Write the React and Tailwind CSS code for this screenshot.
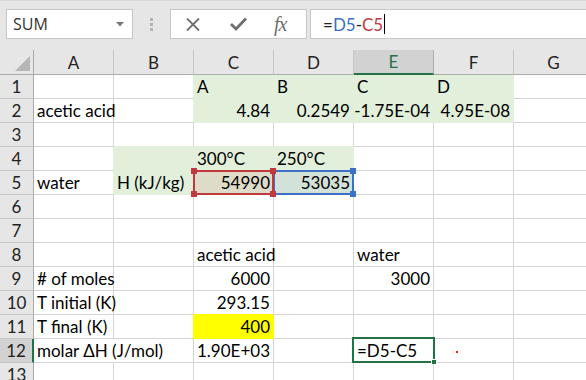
import React from "react";

const BR = {
  n: "border-r-[#d4d4d4]",
  g: "border-r-[#e2efda]",
  y: "border-r-[#ffff00]",
  t: "border-r-[#dfdbc9]",
  b: "border-r-[#d2e2d8]",
  w: "border-r-white",
};
const BB = {
  n: "border-b-[#d4d4d4]",
  g: "border-b-[#e2efda]",
  y: "border-b-[#ffff00]",
  t: "border-b-[#dfdbc9]",
  b: "border-b-[#d2e2d8]",
};
const BG = {
  n: "",
  g: "bg-[#e2efda]",
  y: "bg-[#ffff00]",
  t: "bg-[#dfdbc9]",
  b: "bg-[#d2e2d8]",
};

const L = (t, f) => ({ t, a: "l", f });
const R = (t, f) => ({ t, a: "r", f });
const E = null;

const rows = [
  [E, E, L("A", "g"), L("B", "g"), L("C", "g"), L("D", "g"), E],
  [L("acetic acid"), E, R("4.84", "g"), R("0.2549", "g"), R("-1.75E-04", "g"), R("4.95E-08", "g"), E],
  [E, E, E, E, E, E, E],
  [E, { f: "g" }, L("300°C", "g"), L("250°C", "g"), E, E, E],
  [L("water"), L("H (kJ/kg)", "g"), R("54990", "t"), R("53035", "b"), E, E, E],
  [E, E, E, E, E, E, E],
  [E, E, E, E, E, E, E],
  [E, E, L("acetic acid"), E, L("water"), E, E],
  [L("# of moles"), E, R("6000"), E, R("3000"), E, E],
  [L("T initial (K)"), E, R("293.15"), E, E, E, E],
  [L("T final (K)"), E, R("400", "y"), E, E, E, E],
  [{ t: "molar ΔH (J/mol)", a: "l", over: true }, E, R("1.90E+03"), E, L("=D5-C5"), E, E],
  [E, E, E, E, E, E, E],
];

const cols = ["A", "B", "C", "D", "E", "F", "G"];

function fillAt(r, c) {
  if (r < 0 || r >= rows.length || c < 0 || c >= 7) return "n";
  const cell = rows[r][c];
  return (cell && cell.f) || "n";
}

function Cell({ r, c }) {
  const cell = rows[r][c];
  const own = fillAt(r, c);
  const right = own !== "n" ? own : fillAt(r, c + 1);
  const down = own !== "n" ? own : fillAt(r + 1, c);
  const br = cell && cell.over ? BR.w : BR[right];
  const bb = BB[down];
  const align = cell && cell.a === "r" ? "justify-end" : "justify-start";
  return (
    <div
      className={`relative flex items-end h-[24px] w-[80px] shrink-0 border-r border-b ${br} ${bb} ${BG[own]} ${align}`}
    >
      {cell && cell.t ? (
        <span className="relative z-10 whitespace-nowrap px-[3px] pb-[1px] leading-[20px] text-[17px] text-black">
          {cell.t}
        </span>
      ) : null}
      {r === 4 && c === 3 ? (
        <div className="absolute left-[-1px] top-[-1px] w-[81px] h-[25px] border-2 border-[#3b70c6] z-20">
          <div className="absolute right-[-4px] top-[-4px] w-[6px] h-[6px] bg-[#3b70c6]" />
          <div className="absolute right-[-4px] bottom-[-4px] w-[6px] h-[6px] bg-[#3b70c6]" />
        </div>
      ) : null}
      {r === 4 && c === 2 ? (
        <div className="absolute left-[-1px] top-[-1px] w-[81px] h-[25px] border-2 border-[#c0393f] z-30">
          <div className="absolute left-[-4px] top-[-4px] w-[6px] h-[6px] bg-[#c0393f]" />
          <div className="absolute right-[-4px] top-[-4px] w-[6px] h-[6px] bg-[#c0393f]" />
          <div className="absolute left-[-4px] bottom-[-4px] w-[6px] h-[6px] bg-[#c0393f]" />
          <div className="absolute right-[-4px] bottom-[-4px] w-[6px] h-[6px] bg-[#c0393f]" />
        </div>
      ) : null}
      {r === 11 && c === 4 ? (
        <>
          <div className="absolute left-[-2px] top-[-2px] w-[83px] h-[26px] border-2 border-[#217346] z-20">
            <div className="absolute right-[-4px] bottom-[-4px] w-[6px] h-[6px] bg-[#217346] border border-white" />
          </div>
          <div className="absolute left-[102px] top-[12px] w-[2px] h-[2px] bg-[#ff2020] z-20" />
        </>
      ) : null}
    </div>
  );
}

export default function App() {
  return (
    <div
      className="w-[586px] h-[380px] overflow-hidden bg-white"
      style={{ fontFamily: "Lato, 'Liberation Sans', sans-serif" }}
    >
      {/* Toolbar */}
      <div className="h-[50px] bg-[#e6e6e6] border-t border-[#dadada] flex items-start pt-[8px]">
        <div className="ml-[6px] w-[127px] h-[30px] bg-white border border-[#c6c6c6] flex items-center justify-between pl-[6px] pr-[8px]">
          <span
            className="text-[16px] text-[#333] leading-none"
            style={{ fontFamily: "'Open Sans', 'Noto Sans', sans-serif" }}
          >
            SUM
          </span>
          <svg width="8" height="5" viewBox="0 0 8 5">
            <path d="M0 0 L8 0 L4 4.5 Z" fill="#777" />
          </svg>
        </div>
        <div className="w-[37px] h-[30px] flex flex-col items-center justify-center gap-[2px]">
          <div className="w-[3px] h-[3px] bg-[#b4b4b4]" />
          <div className="w-[3px] h-[3px] bg-[#b4b4b4]" />
          <div className="w-[3px] h-[3px] bg-[#b4b4b4]" />
        </div>
        <div className="w-[137px] h-[30px] bg-white border border-[#c6c6c6] flex items-center">
          <svg className="ml-[15px]" width="14" height="13" viewBox="0 0 14 13">
            <path d="M1 0.5 L13 12.5 M13 0.5 L1 12.5" stroke="#6e6e6e" strokeWidth="1.8" fill="none" />
          </svg>
          <svg className="ml-[30px]" width="17" height="14" viewBox="0 0 17 14">
            <path d="M1 7 L6 12 L16 1.5" stroke="#6e6e6e" strokeWidth="2.8" fill="none" />
          </svg>
          <span
            className="ml-[27px] italic text-[20px] text-[#6e6e6e] leading-none tracking-[-1px]"
            style={{ fontFamily: "'Liberation Serif', 'DejaVu Serif', serif" }}
          >
            fx
          </span>
        </div>
        <div className="ml-[3px] flex-1 h-[30px] bg-white border border-[#c6c6c6] border-r-0 flex items-center pl-[12px]">
          <span className="text-[17px] leading-none text-[#222]">=</span>
          <span className="text-[17px] leading-none text-[#3b70c6]">D5</span>
          <span className="text-[17px] leading-none text-[#222]">-</span>
          <span className="text-[17px] leading-none text-[#c0393f]">C5</span>
          <span className="ml-[1px] w-[1px] h-[20px] bg-black" />
        </div>
      </div>

      {/* Column headers */}
      <div className="flex h-[25px] bg-[#e6e6e6]">
        <div className="relative w-[34px] shrink-0 border-r border-b border-[#ababab]">
          <svg className="absolute right-[3px] bottom-[3px]" width="15" height="15" viewBox="0 0 15 15">
            <path d="M15 0 L15 15 L0 15 Z" fill="#b6b6b6" />
          </svg>
        </div>
        {cols.map((c) =>
          c === "E" ? (
            <div
              key={c}
              className="w-[80px] shrink-0 flex items-center justify-center bg-[#d2d2d2] border-r border-r-[#ababab] border-b-2 border-b-[#217346] text-[17px] text-[#217346] leading-none"
            >
              {c}
            </div>
          ) : (
            <div
              key={c}
              className="w-[80px] shrink-0 flex items-center justify-center border-r border-r-[#c6c6c6] border-b border-b-[#ababab] text-[17px] text-[#222] leading-none"
            >
              {c}
            </div>
          )
        )}
      </div>

      {/* Rows */}
      {rows.map((row, r) => (
        <div key={r} className="flex">
          {r === 11 ? (
            <div className="w-[34px] h-[24px] shrink-0 flex items-end justify-center pb-[1px] bg-[#d2d2d2] border-r-2 border-r-[#217346] border-b border-b-[#c6c6c6] text-[17px] leading-[20px] text-[#222]">
              {r + 1}
            </div>
          ) : (
            <div className="w-[34px] h-[24px] shrink-0 flex items-end justify-center pb-[1px] bg-[#e6e6e6] border-r border-r-[#ababab] border-b border-b-[#c6c6c6] text-[17px] leading-[20px] text-[#222]">
              {r + 1}
            </div>
          )}
          {row.map((_, c) => (
            <Cell key={c} r={r} c={c} />
          ))}
        </div>
      ))}
    </div>
  );
}
